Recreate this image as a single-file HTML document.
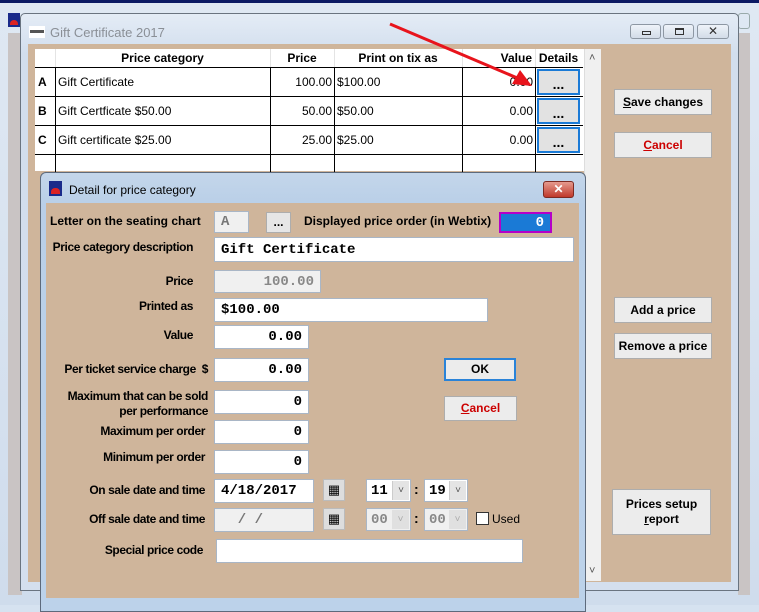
<!DOCTYPE html>
<html><head><meta charset="utf-8"><style>
*{box-sizing:border-box;margin:0;padding:0}
body{width:759px;height:605px;overflow:hidden;position:relative;background:#d6e2f0;font-family:"Liberation Sans",Arial,sans-serif;font-size:12px;color:#000}
.a{position:absolute}
.btn{position:absolute;background:#ececec;border:1px solid #adadad;font-weight:bold;font-size:12px;text-align:center;display:flex;align-items:center;justify-content:center;line-height:15px}
.lbl{position:absolute;font-weight:bold;font-size:12px;text-align:right;white-space:nowrap;letter-spacing:-0.4px}
.in{position:absolute;background:#fff;border:1px solid #a9b6c6;font-family:"Liberation Mono",monospace;font-weight:bold;font-size:14px;padding:0 6px;display:flex;align-items:center;white-space:pre}
.r{justify-content:flex-end}
.dis{background:#f0f0f0;color:#888}
.cell{position:absolute;font-size:12px;white-space:nowrap}
.hl{position:absolute;background:#000;height:1px}
.vl{position:absolute;background:#000;width:1px}
.dots{position:absolute;border:2px solid #1a7ad6;background:#e2e2e2;font-weight:bold;font-size:14px;text-align:center;line-height:26px}
</style></head><body>
<div class="a" style="left:0;top:0;width:759px;height:3px;background:#0c1a64"></div>
<div class="a" style="left:0;top:3px;width:759px;height:602px;background:linear-gradient(#dfe8f3,#cfdcec)"></div>
<div class="a" style="left:8px;top:13px;width:12px;height:14px;background:#1a2a8a"><div class="a" style="left:2px;top:7px;width:8px;height:5px;background:#d22;border-radius:4px 4px 0 0"></div></div>
<div class="a" style="left:8px;top:33px;width:14px;height:562px;background:#c9c4c4"></div>
<div class="a" style="left:738px;top:33px;width:12px;height:562px;background:#c9c4c4"></div>
<div class="a" style="left:738px;top:13px;width:12px;height:16px;border:1px solid #9aa;border-radius:3px"></div>
<div class="a" style="left:20px;top:13px;width:719px;height:578px;background:linear-gradient(#e4ecf6,#d2deed 40px,#d4dfee);border:1px solid #6a7480;border-radius:5px 5px 0 0"></div>
<div class="a" style="left:29px;top:26px;width:16px;height:12px;background:#fff"><div class="a" style="left:1px;top:4px;width:14px;height:3px;background:#555"></div></div>
<div class="a" style="left:50px;top:25px;font-size:13px;color:#8a8f96">Gift Certificate 2017</div>
<div class="a" style="left:630px;top:24px;width:31px;height:15px;border:1px solid #8d97a3;border-radius:3px;background:linear-gradient(#eef3f9,#d3dce8)"><div class="a" style="left:11px;top:6px;width:9px;height:4px;border:1px solid #333"></div></div>
<div class="a" style="left:663px;top:24px;width:31px;height:15px;border:1px solid #8d97a3;border-radius:3px;background:linear-gradient(#eef3f9,#d3dce8)"><div class="a" style="left:11px;top:3px;width:9px;height:7px;border:1px solid #333;border-top-width:2px"></div></div>
<div class="a" style="left:697px;top:24px;width:32px;height:15px;border:1px solid #8d97a3;border-radius:3px;background:linear-gradient(#eef3f9,#d3dce8);text-align:center;font-size:12px;line-height:13px;color:#333">✕</div>
<div class="a" style="left:28px;top:44px;width:703px;height:538px;background:#cfb59b"></div>
<div class="a" style="left:35px;top:49px;width:550px;height:122px;background:#fff"></div>
<div class="a" style="left:584px;top:49px;width:17px;height:532px;background:#f0f0f0;border-left:1px solid #ddd"></div>
<div class="a" style="left:589px;top:52px;font-size:11px;color:#555">˄</div>
<div class="a" style="left:589px;top:565px;font-size:11px;color:#555">˅</div>
<div class="hl" style="left:35px;top:67px;width:548px"></div>
<div class="hl" style="left:35px;top:96px;width:548px"></div>
<div class="hl" style="left:35px;top:125px;width:548px"></div>
<div class="hl" style="left:35px;top:154px;width:548px"></div>
<div class="vl" style="left:55px;top:67px;height:105px"></div>
<div class="vl" style="left:270px;top:67px;height:105px"></div>
<div class="vl" style="left:334px;top:67px;height:105px"></div>
<div class="vl" style="left:462px;top:67px;height:105px"></div>
<div class="vl" style="left:535px;top:67px;height:105px"></div>
<div class="a" style="left:55px;top:49px;width:1px;height:18px;background:#e4e4e4"></div>
<div class="a" style="left:270px;top:49px;width:1px;height:18px;background:#e4e4e4"></div>
<div class="a" style="left:334px;top:49px;width:1px;height:18px;background:#e4e4e4"></div>
<div class="a" style="left:462px;top:49px;width:1px;height:18px;background:#e4e4e4"></div>
<div class="a" style="left:535px;top:49px;width:1px;height:18px;background:#e4e4e4"></div>
<div class="cell" style="left:55px;top:51px;width:215px;text-align:center;font-weight:bold">Price category</div>
<div class="cell" style="left:270px;top:51px;width:64px;text-align:center;font-weight:bold">Price</div>
<div class="cell" style="left:334px;top:51px;width:128px;text-align:center;font-weight:bold">Print on tix as</div>
<div class="cell" style="left:462px;top:51px;width:70px;text-align:right;font-weight:bold">Value</div>
<div class="cell" style="left:535px;top:51px;width:47px;text-align:center;font-weight:bold">Details</div>
<div class="cell" style="left:38px;top:75px;font-weight:bold">A</div>
<div class="cell" style="left:38px;top:104px;font-weight:bold">B</div>
<div class="cell" style="left:38px;top:133px;font-weight:bold">C</div>
<div class="cell" style="left:58px;top:75px">Gift Certificate</div>
<div class="cell" style="left:58px;top:104px">Gift Certficate $50.00</div>
<div class="cell" style="left:58px;top:133px">Gift certificate $25.00</div>
<div class="cell" style="left:270px;top:75px;width:62px;text-align:right">100.00</div>
<div class="cell" style="left:270px;top:104px;width:62px;text-align:right">50.00</div>
<div class="cell" style="left:270px;top:133px;width:62px;text-align:right">25.00</div>
<div class="cell" style="left:337px;top:75px">$100.00</div>
<div class="cell" style="left:337px;top:104px">$50.00</div>
<div class="cell" style="left:337px;top:133px">$25.00</div>
<div class="cell" style="left:462px;top:75px;width:71px;text-align:right">0.00</div>
<div class="cell" style="left:462px;top:104px;width:71px;text-align:right">0.00</div>
<div class="cell" style="left:462px;top:133px;width:71px;text-align:right">0.00</div>
<div class="dots" style="left:537px;top:69px;width:43px;height:26px">...</div>
<div class="dots" style="left:537px;top:98px;width:43px;height:26px">...</div>
<div class="dots" style="left:537px;top:127px;width:43px;height:26px">...</div>
<svg class="a" style="left:0;top:0" width="759" height="605"><line x1="390" y1="24" x2="522" y2="80" stroke="#e8141c" stroke-width="3"/><polygon points="532,86 512,84 520,70" fill="#e8141c"/></svg>
<div class="btn" style="left:614px;top:89px;width:98px;height:26px"><span><u>S</u>ave changes</span></div>
<div class="btn" style="left:614px;top:132px;width:98px;height:26px;color:#c00"><span><u>C</u>ancel</span></div>
<div class="btn" style="left:614px;top:297px;width:98px;height:26px">Add a price</div>
<div class="btn" style="left:614px;top:333px;width:98px;height:26px">Remove a price</div>
<div class="btn" style="left:612px;top:489px;width:99px;height:46px"><span>Prices setup<br><u>r</u>eport</span></div>
<div class="a" style="left:40px;top:172px;width:546px;height:440px;background:linear-gradient(#c4d6ea,#b9cfe8 32px,#bcd2ea);border:1px solid #5d6a7c;border-radius:6px 6px 0 0"></div>
<div class="a" style="left:49px;top:181px;width:13px;height:15px;background:#1a2a8a"><div class="a" style="left:2px;top:7px;width:9px;height:6px;background:#d22;border-radius:4px 4px 0 0"></div></div>
<div class="a" style="left:69px;top:183px;font-size:12px">Detail for price category</div>
<div class="a" style="left:543px;top:181px;width:31px;height:17px;background:linear-gradient(#e59a8e,#c0392b);border:1px solid #7d2a22;border-radius:3px;color:#fff;text-align:center;font-weight:bold;line-height:15px;font-size:12px">✕</div>
<div class="a" style="left:46px;top:203px;width:533px;height:395px;background:#cfb59b"></div>
<div class="lbl" style="left:50px;top:214px;letter-spacing:0">Letter on the seating chart</div>
<div class="in dis" style="left:214px;top:211px;width:35px;height:22px;color:#777">A</div>
<div class="btn" style="left:266px;top:212px;width:25px;height:21px;background:#e6e6e6">...</div>
<div class="lbl" style="left:304px;top:214px;letter-spacing:0">Displayed price order (in Webtix)</div>
<div class="in r" style="left:499px;top:212px;width:53px;height:21px;background:#1a7ad6;border:2px solid #b400c8;color:#fff">0</div>
<div class="lbl" style="right:566px;top:240px">Price category description</div>
<div class="in" style="left:214px;top:237px;width:360px;height:25px">Gift Certificate</div>
<div class="lbl" style="right:566px;top:274px">Price</div>
<div class="in r dis" style="left:214px;top:270px;width:107px;height:23px">100.00</div>
<div class="lbl" style="right:566px;top:299px">Printed as</div>
<div class="in" style="left:214px;top:298px;width:274px;height:24px">$100.00</div>
<div class="lbl" style="right:566px;top:328px">Value</div>
<div class="in r" style="left:214px;top:325px;width:95px;height:24px">0.00</div>
<div class="lbl" style="right:551px;top:362px">Per ticket service charge&nbsp; $</div>
<div class="in r" style="left:214px;top:358px;width:95px;height:24px">0.00</div>
<div class="btn" style="left:444px;top:358px;width:72px;height:23px;border:2px solid #2a83d8">OK</div>
<div class="lbl" style="right:551px;top:389px;line-height:15px">Maximum that can be sold<br>per performance</div>
<div class="in r" style="left:214px;top:390px;width:95px;height:24px">0</div>
<div class="btn" style="left:444px;top:396px;width:73px;height:25px;color:#c00"><span><u>C</u>ancel</span></div>
<div class="lbl" style="right:554px;top:424px">Maximum per order</div>
<div class="in r" style="left:214px;top:420px;width:95px;height:24px">0</div>
<div class="lbl" style="right:554px;top:450px">Minimum per order</div>
<div class="in r" style="left:214px;top:450px;width:95px;height:24px">0</div>
<div class="lbl" style="right:554px;top:483px">On sale date and time</div>
<div class="in" style="left:214px;top:479px;width:100px;height:24px">4/18/2017</div>
<div class="a" style="left:323px;top:479px;width:22px;height:22px;background:#ddd;border:1px solid #bbb;font-size:13px;text-align:center;line-height:20px">▦</div>
<div class="in" style="left:366px;top:479px;width:45px;height:23px;padding-left:4px">11</div>
<div class="a" style="left:392px;top:481px;width:17px;height:19px;background:#e4e4e4;border-left:1px solid #ccc;font-size:10px;text-align:center;line-height:19px;color:#555">˅</div>
<div class="a" style="left:414px;top:481px;font-weight:bold;font-size:14px">:</div>
<div class="in" style="left:424px;top:479px;width:44px;height:23px;padding-left:4px">19</div>
<div class="a" style="left:449px;top:481px;width:17px;height:19px;background:#e4e4e4;border-left:1px solid #ccc;font-size:10px;text-align:center;line-height:19px;color:#555">˅</div>
<div class="lbl" style="right:554px;top:512px">Off sale date and time</div>
<div class="in dis" style="left:214px;top:508px;width:100px;height:24px;color:#777">  / /</div>
<div class="a" style="left:323px;top:508px;width:22px;height:22px;background:#ddd;border:1px solid #bbb;font-size:13px;text-align:center;line-height:20px">▦</div>
<div class="in dis" style="left:366px;top:508px;width:45px;height:23px;padding-left:4px">00</div>
<div class="a" style="left:392px;top:510px;width:17px;height:19px;background:#e0e0e0;font-size:10px;text-align:center;line-height:19px;color:#aaa">˅</div>
<div class="a" style="left:414px;top:510px;font-weight:bold;font-size:14px">:</div>
<div class="in dis" style="left:424px;top:508px;width:44px;height:23px;padding-left:4px">00</div>
<div class="a" style="left:449px;top:510px;width:17px;height:19px;background:#e0e0e0;font-size:10px;text-align:center;line-height:19px;color:#aaa">˅</div>
<div class="a" style="left:476px;top:512px;width:13px;height:13px;background:#fff;border:1px solid #333"></div>
<div class="a" style="left:492px;top:512px;font-size:12px">Used</div>
<div class="lbl" style="right:556px;top:543px">Special price code</div>
<div class="in" style="left:216px;top:539px;width:307px;height:24px"></div>
</body></html>
